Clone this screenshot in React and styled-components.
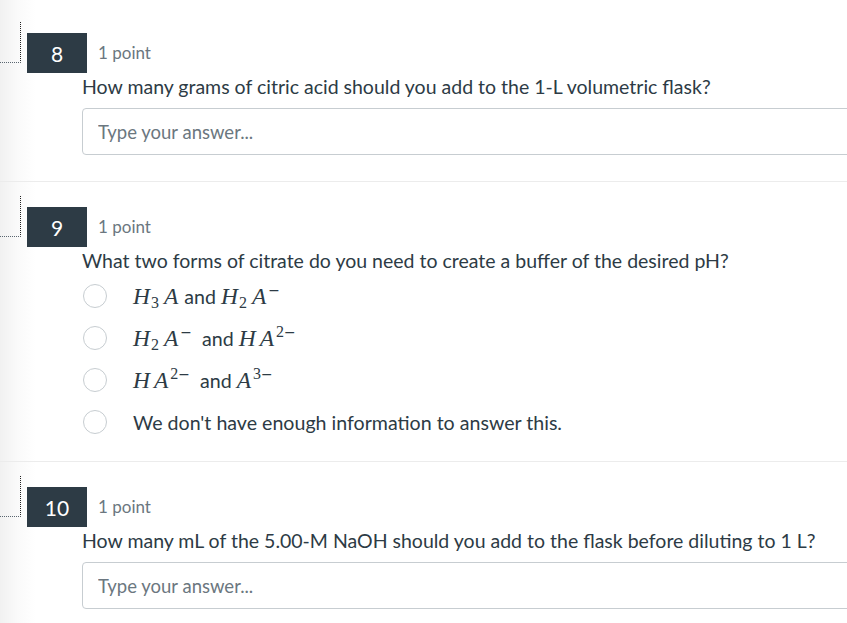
import React from 'react';
import styled, { createGlobalStyle } from 'styled-components';

const GlobalStyle = createGlobalStyle`
  html, body {
    margin: 0;
    padding: 0;
  }
  body {
    overflow: hidden;
    font-family: Lato, "Open Sans", sans-serif;
    color: #2d3b45;
    background: linear-gradient(to right, #f1f1f1 0, #fafafa 18px, #fff 36px);
  }
`;

const Page = styled.div`
  width: 847px;
`;

const Question = styled.section`
  border-top: 1px solid ${p => (p.$first ? 'transparent' : '#ececec')};
  padding: ${p => (p.$first ? 21 : 14)}px 0 ${p => p.$bottom}px 0;
`;

const Header = styled.div`
  display: flex;
  align-items: flex-start;
`;

const Marker = styled.div`
  width: 20px;
  height: 40px;
  border-right: 1px dotted #222;
  border-bottom: 1px dotted #5a6670;
  flex-shrink: 0;
`;

const Badge = styled.div`
  margin: 11px 0 0 6px;
  width: 60px;
  height: 40px;
  background: #2d3b45;
  color: #fff;
  font-size: 21px;
  display: flex;
  align-items: center;
  justify-content: center;
`;

const Points = styled.div`
  margin: 11px 0 0 11px;
  height: 40px;
  line-height: 40px;
  font-size: 17px;
  color: #6b7780;
`;

const Body = styled.div`
  padding-left: 82px;
`;

const Prompt = styled.div`
  margin-top: 2px;
  font-size: 19.5px;
  line-height: 24px;
`;

const AnswerInput = styled.input`
  display: block;
  box-sizing: border-box;
  margin-top: 9px;
  width: 820px;
  height: 47px;
  padding: 0 15px;
  border: 1px solid #c7cdd1;
  border-radius: 4px;
  font-family: Lato, "Open Sans", sans-serif;
  font-size: 18.5px;
  color: #2d3b45;
  outline: none;

  &::placeholder {
    color: #6b7780;
  }
`;

const Options = styled.div`
  margin-top: 2px;
`;

const Option = styled.label`
  display: flex;
  align-items: center;
  height: 42px;
  font-size: 19.6px;
`;

const Radio = styled.span`
  width: 22px;
  height: 22px;
  border: 1px solid #c7cdd1;
  border-radius: 50%;
  background: #fff;
  margin-left: 1px;
  margin-right: 26px;
  flex-shrink: 0;
`;

const Math = styled.span`
  font-family: "Liberation Serif", "DejaVu Serif", serif;
  font-style: italic;
  font-size: 23.5px;
  white-space: nowrap;
  margin-right: ${p => p.$gap || 0}px;
`;

const Sub = styled.sub`
  font-style: normal;
  font-size: 16px;
  vertical-align: -4px;
  line-height: 0;
  margin: 0 5px 0 1px;
`;

const Sup = styled.sup`
  font-style: normal;
  font-size: 16px;
  vertical-align: 9px;
  line-height: 0;
  margin-left: 2px;
`;

const Minus = styled.span`
  font-family: "DejaVu Sans", sans-serif;
  font-size: 14px;
`;

const Sp = styled.span`
  margin-left: 4px;
`;

const H3A = () => <>H<Sub>3</Sub>A</>;
const H2A = () => <>H<Sub>2</Sub>A<Sup><Minus>−</Minus></Sup></>;
const HA2 = () => <>H<Sp>A</Sp><Sup>2<Minus>−</Minus></Sup></>;
const A3 = () => <>A<Sup>3<Minus>−</Minus></Sup></>;

const App = () => (
  <Page>
    <GlobalStyle />
    <Question $first $bottom={26}>
      <Header>
        <Marker />
        <Badge>8</Badge>
        <Points>1 point</Points>
      </Header>
      <Body>
        <Prompt>How many grams of citric acid should you add to the 1-L volumetric flask?</Prompt>
        <AnswerInput placeholder="Type your answer..." />
      </Body>
    </Question>

    <Question $bottom={18}>
      <Header>
        <Marker />
        <Badge>9</Badge>
        <Points>1 point</Points>
      </Header>
      <Body>
        <Prompt>What two forms of citrate do you need to create a buffer of the desired pH?</Prompt>
        <Options>
          <Option><Radio /><Math $gap={6}><H3A /></Math>and&nbsp;<Math><H2A /></Math></Option>
          <Option><Radio /><Math $gap={10}><H2A /></Math>and&nbsp;<Math><HA2 /></Math></Option>
          <Option><Radio /><Math $gap={10}><HA2 /></Math>and&nbsp;<Math><A3 /></Math></Option>
          <Option><Radio />We don't have enough information to answer this.</Option>
        </Options>
      </Body>
    </Question>

    <Question $bottom={26}>
      <Header>
        <Marker />
        <Badge>10</Badge>
        <Points>1 point</Points>
      </Header>
      <Body>
        <Prompt>How many mL of the 5.00-M NaOH should you add to the flask before diluting to 1 L?</Prompt>
        <AnswerInput placeholder="Type your answer..." />
      </Body>
    </Question>
  </Page>
);

export default App;
